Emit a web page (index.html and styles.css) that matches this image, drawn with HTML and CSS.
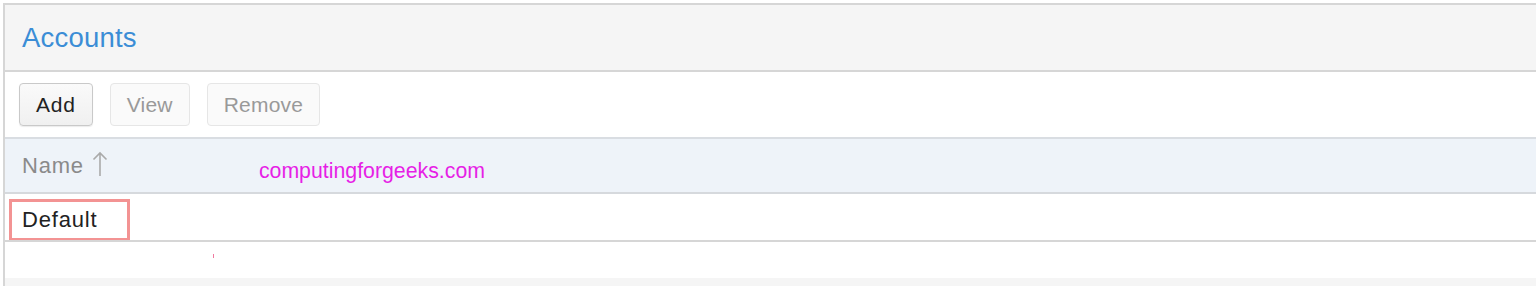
FILE: index.html
```html
<!DOCTYPE html>
<html lang="en">
<head>
    <meta charset="UTF-8">
    <meta name="viewport" content="width=device-width, initial-scale=1.0">
    <title>Accounts</title>
    <link rel="stylesheet" href="styles.css">
</head>
<body>
    <div class="panel">
        <div class="panel-header">
            <h2 class="panel-title">Accounts</h2>
        </div>
        <div class="toolbar">
            <button class="btn">Add</button>
            <button class="btn btn-disabled">View</button>
            <button class="btn btn-disabled">Remove</button>
        </div>
        <div class="table-head">
            <span class="col-name">Name</span>
            <svg class="sort-icon" width="16" height="26" viewBox="0 0 16 26">
                <path d="M8 25V2M1.5 8.5L8 2l6.5 6.5" fill="none" stroke="#aaa" stroke-width="1.6"/>
            </svg>
            <span class="watermark">computingforgeeks.com</span>
        </div>
        <div class="table-row">
            <span class="cell-highlight">Default</span>
        </div>
        <div class="table-empty">
            <span class="tick"></span>
        </div>
        <div class="panel-footer"></div>
    </div>
</body>
</html>
```

FILE: styles.css
```css
body {
    margin: 0;
    padding: 3px 0 0 3px;
    background: #fff;
    font-family: "Liberation Sans", Arial, sans-serif;
}

.panel {
    border-top: 2px solid #d6d6d6;
    border-left: 2px solid #d6d6d6;
}

.panel-header {
    height: 65px;
    background: #f5f5f5;
    border-bottom: 2px solid #d6d6d6;
    display: flex;
    align-items: center;
    padding-left: 17px;
}

.panel-title {
    margin: 0;
    font-size: 27.5px;
    font-weight: normal;
    color: #3b8dd6;
    letter-spacing: 0.2px;
}

.toolbar {
    height: 65px;
    display: flex;
    align-items: center;
    gap: 17px;
    padding-left: 14px;
    border-bottom: 2px solid #d9dde2;
}

.btn {
    height: 43px;
    padding: 0 16px;
    font-family: "Liberation Sans", Arial, sans-serif;
    font-size: 21px;
    letter-spacing: 0.2px;
    color: #222;
    background: linear-gradient(#fafafa, #f0f0f0);
    border: 1px solid #c9c9c9;
    border-radius: 4px;
    box-shadow: 0 1px 1px rgba(0, 0, 0, 0.08);
}

.btn:first-child {
    letter-spacing: 0.8px;
}

.btn-disabled {
    color: #999;
    background: #fafafa;
    border-color: #e6e6e6;
    box-shadow: none;
}

.table-head {
    height: 53px;
    background: #eef3f9;
    border-bottom: 2px solid #d6d9dd;
    display: flex;
    align-items: center;
    padding-left: 17px;
}

.col-name {
    font-size: 22px;
    letter-spacing: 0.8px;
    color: #8a8a8a;
}

.sort-icon {
    margin-left: 8px;
    margin-top: -3px;
}

.watermark {
    margin-left: 151px;
    margin-top: 12px;
    font-size: 21.3px;
    color: #e61fe6;
}

.table-row {
    height: 46px;
    border-bottom: 2px solid #d6d6d6;
    display: flex;
    align-items: flex-end;
    padding-left: 4px;
}

.cell-highlight {
    box-sizing: border-box;
    width: 121px;
    height: 41px;
    border: 3px solid #f39393;
    border-bottom-width: 2px;
    padding-left: 10px;
    font-size: 22px;
    letter-spacing: 0.8px;
    line-height: 36px;
    color: #222;
}

.table-empty {
    height: 36px;
    position: relative;
}

.tick {
    position: absolute;
    left: 208px;
    top: 12px;
    width: 1px;
    height: 4px;
    background: #f07aa0;
}

.panel-footer {
    height: 20px;
    background: #f5f5f5;
}
```
